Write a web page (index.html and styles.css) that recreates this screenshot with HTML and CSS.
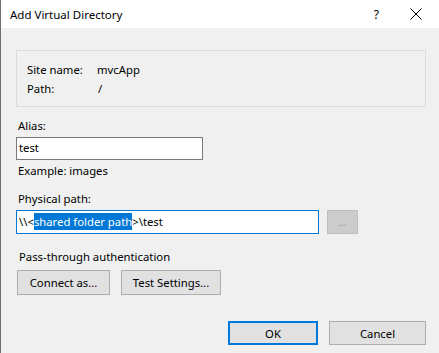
FILE: index.html
```html
<!DOCTYPE html>
<html>
<head>
<meta charset="utf-8">
<link rel="stylesheet" href="styles.css">
</head>
<body>
<div class="dialog">
  <div class="titlebar">
    <span class="title">Add Virtual Directory</span>
    <span class="help">?</span>
    <svg class="close" width="12" height="12" viewBox="0 0 12 12"><path d="M0.5 0.5L11.5 11.5M11.5 0.5L0.5 11.5" stroke="#000" stroke-width="1" fill="none"/></svg>
  </div>
  <div class="content">
    <div class="group">
      <div class="info-row"><span class="info-label">Site name:</span><span>mvcApp</span></div>
      <div class="info-row"><span class="info-label">Path:</span><span class="slash">/</span></div>
    </div>
    <div class="label label-alias">Alias:</div>
    <div class="input input-alias">test</div>
    <div class="label label-example">Example: images</div>
    <div class="label label-phys">Physical path:</div>
    <div class="phys-row">
      <div class="input input-phys focused">\\&lt;<span class="sel">shared folder path</span>&gt;\test</div>
      <div class="btn btn-browse">...</div>
    </div>
    <div class="label label-pass">Pass-through authentication</div>
    <div class="btn-row">
      <div class="btn btn-connect">Connect as...</div>
      <div class="btn btn-test">Test Settings...</div>
    </div>
    <div class="footer">
      <div class="btn btn-ok">OK</div>
      <div class="btn btn-cancel">Cancel</div>
    </div>
  </div>
</div>
</body>
</html>
```

FILE: styles.css
```css
html, body {
  margin: 0;
  padding: 0;
}
body {
  width: 439px;
  height: 353px;
  overflow: hidden;
  font-family: "Noto Sans", "Open Sans", sans-serif;
  font-size: 11.3px;
  color: #000;
}
.dialog {
  width: 438px;
  height: 353px;
  border-left: 1px solid #707070;
  background: #f0f0f0;
  display: flex;
  flex-direction: column;
}
.titlebar {
  height: 28px;
  background: #fff;
  display: flex;
  align-items: center;
  padding-left: 9px;
}
.title {
  font-size: 11.5px;
  flex: 1;
}
.help {
  font-size: 12px;
  margin-right: 31px;
}
.close {
  margin-right: 17px;
}
.content {
  flex: 1;
  padding: 22px 13px 0 15px;
  display: flex;
  flex-direction: column;
  align-items: flex-start;
}
.group {
  box-sizing: border-box;
  width: 410px;
  height: 57px;
  border: 1px solid #dcdcdc;
  padding: 9px 0 0 10px;
}
.info-row {
  display: flex;
  height: 19px;
  line-height: 19px;
}
.info-label {
  width: 70px;
}
.slash {
  padding-left: 1px;
}
.label {
  line-height: 16px;
  padding-left: 2px;
}
.label-alias { margin-top: 11px; }
.label-example { margin-top: 3px; }
.label-phys { margin-top: 12px; }
.label-pass { margin-top: 15px; padding-left: 3px; }
.input {
  box-sizing: border-box;
  background: #fff;
  border: 1px solid #7a7a7a;
  height: 23px;
  line-height: 20px;
  padding-left: 2px;
  white-space: nowrap;
}
.input-alias {
  margin-top: 3px;
  width: 187px;
}
.phys-row {
  margin-top: 3px;
  display: flex;
  align-items: center;
  gap: 8px;
}
.input-phys {
  width: 303px;
  height: 24px;
  line-height: 21px;
}
.focused {
  border-color: #0078d7;
}
.sel {
  background: #0078d7;
  color: #fff;
  display: inline-block;
  line-height: 17px;
}
.btn {
  box-sizing: border-box;
  display: flex;
  align-items: center;
  justify-content: center;
  background: #e1e1e1;
  border: 1px solid #adadad;
}
.btn-browse {
  width: 31px;
  height: 24px;
  background: #cccccc;
  border-color: #bfbfbf;
  color: #9a9a9a;
  font-size: 10px;
}
.btn-row {
  margin-top: 5px;
  display: flex;
  gap: 11px;
  padding-left: 1px;
}
.btn-connect {
  width: 93px;
  height: 25px;
}
.btn-test {
  width: 100px;
  height: 25px;
}
.footer {
  align-self: stretch;
  margin-top: 26px;
  display: flex;
  justify-content: flex-end;
  gap: 11px;
}
.btn-ok {
  width: 90px;
  height: 24px;
  border: 2px solid #0078d7;
}
.btn-cancel {
  width: 97px;
  height: 24px;
}
```
